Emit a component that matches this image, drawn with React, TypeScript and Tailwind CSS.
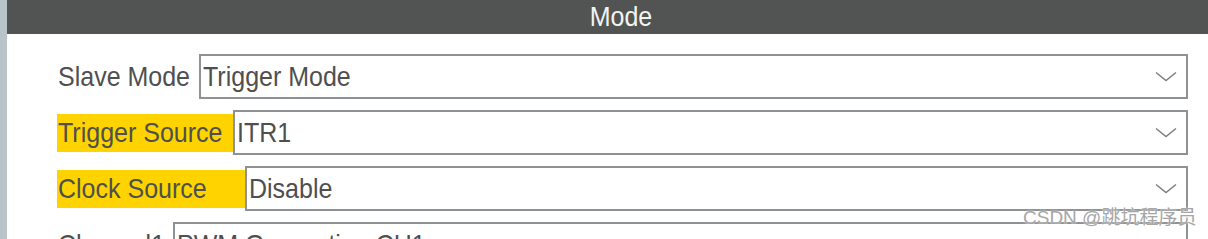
import React from "react";

const font = { fontFamily: '"Liberation Sans", Arial, sans-serif' };

function Chevron() {
  return (
    <svg width="22" height="11" viewBox="0 0 22 11" className="shrink-0 mr-[9px]">
      <polyline points="1,1.5 11,9.5 21,1.5" fill="none" stroke="#7d8184" strokeWidth="1.6" />
    </svg>
  );
}

function Row({ label, value, labelW, highlight }: { label: string; value: string; labelW: string; highlight?: boolean }) {
  return (
    <div className="flex h-[45px] items-center">
      <div className={`${labelW} shrink-0 flex items-center h-[38px] pl-[1px] ${highlight ? "bg-[#ffd300]" : ""}`}>
        <span className="inline-block scale-y-[1.12] text-[25px] leading-none text-[#4f4f4f] whitespace-nowrap">{label}</span>
      </div>
      <div className="flex-1 h-[45px] border-2 border-[#8e9295] bg-white flex items-center justify-between pl-[2px]">
        <span className="inline-block scale-y-[1.12] text-[25px] leading-none text-[#4f4f4f] whitespace-nowrap">{value}</span>
        <Chevron />
      </div>
    </div>
  );
}

export default function App() {
  return (
    <div className="relative flex h-[239px] w-[1208px] overflow-hidden bg-white" style={font}>
      <div className="w-[7px] shrink-0 bg-[#b9c3ca]" />
      <div className="flex-1 flex flex-col">
        <div className="h-[34px] shrink-0 bg-[#525453] flex items-center justify-center pl-[27px]">
          <span className="inline-block scale-y-[1.12] text-[25px] leading-none text-[#f2f4f4] -mt-[2px]">Mode</span>
        </div>
        <div className="flex flex-col gap-[11px] pt-[20px] pl-[50px] pr-[20px]">
          <Row label="Slave Mode" value="Trigger Mode" labelW="w-[142px]" />
          <Row label="Trigger Source" value="ITR1" labelW="w-[176px]" highlight />
          <Row label="Clock Source" value="Disable" labelW="w-[188px]" highlight />
          <Row label="Channel1" value="PWM Generation CH1" labelW="w-[116px]" />
        </div>
      </div>
      <div
        className="absolute left-[1023px] top-[208px] text-[19px] leading-none text-[#a6a6a6] whitespace-nowrap"
        style={{ fontFamily: '"Liberation Sans", "Noto Sans CJK SC", sans-serif', textShadow: "0 0 2px #ffffff" }}
      >
        CSDN @跳坑程序员
      </div>
    </div>
  );
}
